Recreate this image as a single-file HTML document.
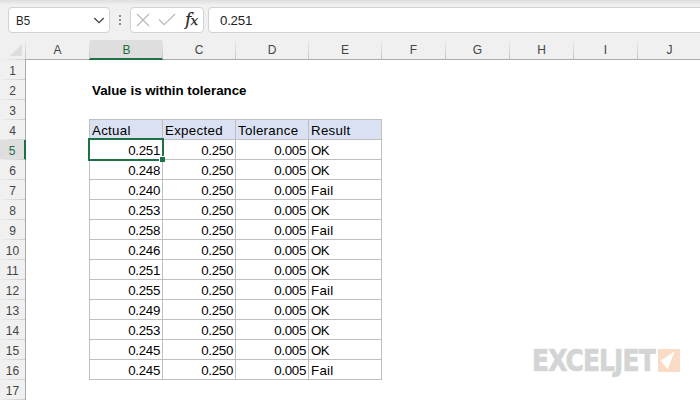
<!DOCTYPE html>
<html><head><meta charset="utf-8"><title>Value is within tolerance</title>
<style>
html,body{margin:0;padding:0}
body{width:700px;height:400px;overflow:hidden;background:#fff;font-family:"Liberation Sans",sans-serif;position:relative;color:#000}
.abs{position:absolute}
#top{left:0;top:0;width:700px;height:41px;background:#f0f0f0}
#topgrad{left:0;top:0;width:700px;height:5px;background:linear-gradient(#dedede,#f0f0f0)}
.box{background:#fff;border:1px solid #d2d2d2;border-radius:4px;box-sizing:border-box}
.ch{top:40px;height:19px;color:#444;font-size:12px;line-height:21px;text-align:center;text-indent:1px}
.cs{top:40px;width:1px;height:19px;background:linear-gradient(#ececec,#c4c4c4)}
.rh{left:0;width:25px;height:20px;color:#444;font-size:12px;line-height:23px;text-align:center}
.rs{left:0;width:25px;height:1px;background:linear-gradient(to right,#ededed,#cdcdcd)}
.c{font-size:13.3px;line-height:20px;height:20px;white-space:nowrap;box-sizing:border-box;letter-spacing:0.3px}
.r{text-align:right;letter-spacing:-0.3px}
</style></head><body>
<div class="abs" id="top"></div>
<div class="abs" id="topgrad"></div>
<div class="abs box" style="left:8px;top:7px;width:102px;height:26px"></div>
<div class="abs" style="left:15.6px;top:8px;height:26px;line-height:26px;font-size:13.3px;color:#222;transform-origin:0 0;transform:scaleX(0.86)">B5</div>
<svg class="abs" style="left:92px;top:15px" width="14" height="10" viewBox="0 0 14 10"><path d="M2.3 3 L7 7.6 L11.7 3" fill="none" stroke="#404040" stroke-width="1.3"/></svg>
<div class="abs" style="left:119px;top:15px;width:2px;height:2px;background:#8c8c8c"></div>
<div class="abs" style="left:119px;top:19px;width:2px;height:2px;background:#8c8c8c"></div>
<div class="abs" style="left:119px;top:23px;width:2px;height:2px;background:#8c8c8c"></div>
<div class="abs box" style="left:130px;top:7px;width:74px;height:26px"></div>
<svg class="abs" style="left:136px;top:13px" width="14" height="14" viewBox="0 0 14 14"><path d="M1 1 L13 13 M13 1 L1 13" fill="none" stroke="#b8b8b8" stroke-width="1.2"/></svg>
<svg class="abs" style="left:158px;top:13px" width="18" height="14" viewBox="0 0 18 14"><path d="M1 6.5 L6.2 11.7 L17 1" fill="none" stroke="#b8b8b8" stroke-width="1.2"/></svg>
<div class="abs" style="left:185.2px;top:8.3px;height:26px;line-height:24px;font-size:16px;font-family:'DejaVu Serif','Liberation Serif',serif;font-style:italic;color:#262626;-webkit-text-stroke:0.25px #262626;letter-spacing:-0.6px;white-space:nowrap">f<span style="font-size:13.5px">x</span></div>
<div class="abs box" style="left:208px;top:7px;width:500px;height:26px"></div>
<div class="abs" style="left:220px;top:8px;height:26px;line-height:25px;font-size:13.3px;color:#222;letter-spacing:-0.25px">0.251</div>

<div class="abs" style="left:0;top:40px;width:700px;height:20px;background:#f0f0f0"></div>
<div class="abs" style="left:25px;top:59px;width:675px;height:1px;background:#ababab"></div>
<div class="abs" style="left:0;top:59px;width:25px;height:1px;background:linear-gradient(to right,#f0f0f0,#d0d0d0)"></div>
<svg class="abs" style="left:10px;top:44px" width="12" height="12" viewBox="0 0 12 12"><path d="M12 0 L12 12 L0 12 Z" fill="#dddddd"/></svg>
<div class="abs ch" style="left:25px;width:64px;">A</div>
<div class="abs ch" style="left:89px;width:73px;background:#dedede;color:#1e6b41;border-bottom:2px solid #1e7145;height:18px;width:74px;">B</div>
<div class="abs ch" style="left:162px;width:73px;">C</div>
<div class="abs ch" style="left:235px;width:73px;">D</div>
<div class="abs ch" style="left:308px;width:73px;">E</div>
<div class="abs ch" style="left:381px;width:64px;">F</div>
<div class="abs ch" style="left:445px;width:64px;">G</div>
<div class="abs ch" style="left:509px;width:64px;">H</div>
<div class="abs ch" style="left:573px;width:64px;">I</div>
<div class="abs ch" style="left:637px;width:64px;">J</div>
<div class="abs cs" style="left:25px"></div>
<div class="abs cs" style="left:89px"></div>
<div class="abs cs" style="left:162px"></div>
<div class="abs cs" style="left:235px"></div>
<div class="abs cs" style="left:308px"></div>
<div class="abs cs" style="left:381px"></div>
<div class="abs cs" style="left:445px"></div>
<div class="abs cs" style="left:509px"></div>
<div class="abs cs" style="left:573px"></div>
<div class="abs cs" style="left:637px"></div>
<div class="abs" style="left:0;top:60px;width:25px;height:340px;background:#f0f0f0;border-right:1px solid #ababab"></div>
<div class="abs rh" style="top:60px;">1</div>
<div class="abs rh" style="top:80px;">2</div>
<div class="abs rh" style="top:100px;">3</div>
<div class="abs rh" style="top:120px;">4</div>
<div class="abs rh" style="top:140px;background:#dedede;color:#1e6b41;border-right:2px solid #1e7145;width:24px;">5</div>
<div class="abs rh" style="top:160px;">6</div>
<div class="abs rh" style="top:180px;">7</div>
<div class="abs rh" style="top:200px;">8</div>
<div class="abs rh" style="top:220px;">9</div>
<div class="abs rh" style="top:240px;">10</div>
<div class="abs rh" style="top:260px;">11</div>
<div class="abs rh" style="top:280px;">12</div>
<div class="abs rh" style="top:300px;">13</div>
<div class="abs rh" style="top:320px;">14</div>
<div class="abs rh" style="top:340px;">15</div>
<div class="abs rh" style="top:360px;">16</div>
<div class="abs rh" style="top:380px;">17</div>
<div class="abs rs" style="top:79px"></div>
<div class="abs rs" style="top:99px"></div>
<div class="abs rs" style="top:119px"></div>
<div class="abs rs" style="top:139px"></div>
<div class="abs rs" style="top:159px"></div>
<div class="abs rs" style="top:179px"></div>
<div class="abs rs" style="top:199px"></div>
<div class="abs rs" style="top:219px"></div>
<div class="abs rs" style="top:239px"></div>
<div class="abs rs" style="top:259px"></div>
<div class="abs rs" style="top:279px"></div>
<div class="abs rs" style="top:299px"></div>
<div class="abs rs" style="top:319px"></div>
<div class="abs rs" style="top:339px"></div>
<div class="abs rs" style="top:359px"></div>
<div class="abs rs" style="top:379px"></div>
<div class="abs rs" style="top:399px"></div>
<div class="abs c" style="left:92px;top:81px;font-weight:bold;letter-spacing:0">Value is within tolerance</div>
<div class="abs" style="left:89px;top:119px;width:293px;height:21px;background:#d9e1f2"></div>
<div class="abs" style="left:89px;top:119px;width:293px;height:1px;background:#bfbfbf"></div>
<div class="abs" style="left:89px;top:139px;width:293px;height:1px;background:#bfbfbf"></div>
<div class="abs" style="left:89px;top:159px;width:293px;height:1px;background:#bfbfbf"></div>
<div class="abs" style="left:89px;top:179px;width:293px;height:1px;background:#bfbfbf"></div>
<div class="abs" style="left:89px;top:199px;width:293px;height:1px;background:#bfbfbf"></div>
<div class="abs" style="left:89px;top:219px;width:293px;height:1px;background:#bfbfbf"></div>
<div class="abs" style="left:89px;top:239px;width:293px;height:1px;background:#bfbfbf"></div>
<div class="abs" style="left:89px;top:259px;width:293px;height:1px;background:#bfbfbf"></div>
<div class="abs" style="left:89px;top:279px;width:293px;height:1px;background:#bfbfbf"></div>
<div class="abs" style="left:89px;top:299px;width:293px;height:1px;background:#bfbfbf"></div>
<div class="abs" style="left:89px;top:319px;width:293px;height:1px;background:#bfbfbf"></div>
<div class="abs" style="left:89px;top:339px;width:293px;height:1px;background:#bfbfbf"></div>
<div class="abs" style="left:89px;top:359px;width:293px;height:1px;background:#bfbfbf"></div>
<div class="abs" style="left:89px;top:379px;width:293px;height:1px;background:#bfbfbf"></div>
<div class="abs" style="left:89px;top:119px;width:1px;height:261px;background:#bfbfbf"></div>
<div class="abs" style="left:162px;top:119px;width:1px;height:261px;background:#bfbfbf"></div>
<div class="abs" style="left:235px;top:119px;width:1px;height:261px;background:#bfbfbf"></div>
<div class="abs" style="left:308px;top:119px;width:1px;height:261px;background:#bfbfbf"></div>
<div class="abs" style="left:381px;top:119px;width:1px;height:261px;background:#bfbfbf"></div>
<div class="abs c" style="left:92px;top:121px">Actual</div>
<div class="abs c" style="left:165px;top:121px">Expected</div>
<div class="abs c" style="left:238px;top:121px">Tolerance</div>
<div class="abs c" style="left:311px;top:121px">Result</div>
<div class="abs c r" style="left:89px;width:71px;top:141px">0.251</div>
<div class="abs c r" style="left:162px;width:71px;top:141px">0.250</div>
<div class="abs c r" style="left:235px;width:71px;top:141px">0.005</div>
<div class="abs c" style="left:311px;top:141px;letter-spacing:-0.5px;">OK</div>
<div class="abs c r" style="left:89px;width:71px;top:161px">0.248</div>
<div class="abs c r" style="left:162px;width:71px;top:161px">0.250</div>
<div class="abs c r" style="left:235px;width:71px;top:161px">0.005</div>
<div class="abs c" style="left:311px;top:161px;letter-spacing:-0.5px;">OK</div>
<div class="abs c r" style="left:89px;width:71px;top:181px">0.240</div>
<div class="abs c r" style="left:162px;width:71px;top:181px">0.250</div>
<div class="abs c r" style="left:235px;width:71px;top:181px">0.005</div>
<div class="abs c" style="left:311px;top:181px;">Fail</div>
<div class="abs c r" style="left:89px;width:71px;top:201px">0.253</div>
<div class="abs c r" style="left:162px;width:71px;top:201px">0.250</div>
<div class="abs c r" style="left:235px;width:71px;top:201px">0.005</div>
<div class="abs c" style="left:311px;top:201px;letter-spacing:-0.5px;">OK</div>
<div class="abs c r" style="left:89px;width:71px;top:221px">0.258</div>
<div class="abs c r" style="left:162px;width:71px;top:221px">0.250</div>
<div class="abs c r" style="left:235px;width:71px;top:221px">0.005</div>
<div class="abs c" style="left:311px;top:221px;">Fail</div>
<div class="abs c r" style="left:89px;width:71px;top:241px">0.246</div>
<div class="abs c r" style="left:162px;width:71px;top:241px">0.250</div>
<div class="abs c r" style="left:235px;width:71px;top:241px">0.005</div>
<div class="abs c" style="left:311px;top:241px;letter-spacing:-0.5px;">OK</div>
<div class="abs c r" style="left:89px;width:71px;top:261px">0.251</div>
<div class="abs c r" style="left:162px;width:71px;top:261px">0.250</div>
<div class="abs c r" style="left:235px;width:71px;top:261px">0.005</div>
<div class="abs c" style="left:311px;top:261px;letter-spacing:-0.5px;">OK</div>
<div class="abs c r" style="left:89px;width:71px;top:281px">0.255</div>
<div class="abs c r" style="left:162px;width:71px;top:281px">0.250</div>
<div class="abs c r" style="left:235px;width:71px;top:281px">0.005</div>
<div class="abs c" style="left:311px;top:281px;">Fail</div>
<div class="abs c r" style="left:89px;width:71px;top:301px">0.249</div>
<div class="abs c r" style="left:162px;width:71px;top:301px">0.250</div>
<div class="abs c r" style="left:235px;width:71px;top:301px">0.005</div>
<div class="abs c" style="left:311px;top:301px;letter-spacing:-0.5px;">OK</div>
<div class="abs c r" style="left:89px;width:71px;top:321px">0.253</div>
<div class="abs c r" style="left:162px;width:71px;top:321px">0.250</div>
<div class="abs c r" style="left:235px;width:71px;top:321px">0.005</div>
<div class="abs c" style="left:311px;top:321px;letter-spacing:-0.5px;">OK</div>
<div class="abs c r" style="left:89px;width:71px;top:341px">0.245</div>
<div class="abs c r" style="left:162px;width:71px;top:341px">0.250</div>
<div class="abs c r" style="left:235px;width:71px;top:341px">0.005</div>
<div class="abs c" style="left:311px;top:341px;letter-spacing:-0.5px;">OK</div>
<div class="abs c r" style="left:89px;width:71px;top:361px">0.245</div>
<div class="abs c r" style="left:162px;width:71px;top:361px">0.250</div>
<div class="abs c r" style="left:235px;width:71px;top:361px">0.005</div>
<div class="abs c" style="left:311px;top:361px;">Fail</div>
<div class="abs" style="left:88px;top:138px;width:76px;height:23px;border:2px solid #1e7145;box-sizing:border-box"></div>
<div class="abs" style="left:159px;top:156px;width:5px;height:5px;background:#1e7145;border:1px solid #fff;border-right:0;border-bottom:0;box-sizing:content-box"></div>
<div class="abs" style="left:531.5px;top:341.7px;-webkit-text-stroke:0.7px #d3d5d5;font-family:'DejaVu Sans Condensed','DejaVu Sans','Liberation Sans',sans-serif;font-size:31px;line-height:36px;font-weight:bold;color:#d3d5d5;letter-spacing:-1px;transform-origin:0 0;transform:scaleX(0.895);white-space:nowrap">EXCELJET</div>
<svg class="abs" style="left:658px;top:349px" width="22" height="23" viewBox="0 0 22 23"><rect width="22" height="23" fill="#fadcc6"/><path d="M16.5 2.5 L2.8 11.5 L9.5 20.2 Z" fill="#fff"/></svg>

</body></html>
